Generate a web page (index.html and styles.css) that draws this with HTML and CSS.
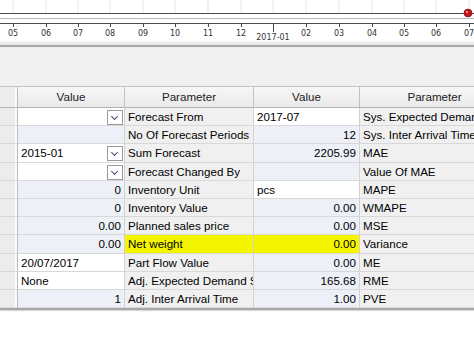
FILE: index.html
```html
<!DOCTYPE html>
<html lang="en">
<head>
    <meta charset="UTF-8">
    <title>Forecast Parameters</title>
    <link rel="stylesheet" href="styles.css">
</head>
<body>
    <div class="timeline">
        <svg width="474" height="45" viewBox="0 0 474 45">
            <g class="grid">
                <line x1="13" y1="0" x2="13" y2="13"/><line x1="46" y1="0" x2="46" y2="13"/>
                <line x1="78" y1="0" x2="78" y2="13"/><line x1="110" y1="0" x2="110" y2="13"/>
                <line x1="143" y1="0" x2="143" y2="13"/><line x1="175" y1="0" x2="175" y2="13"/>
                <line x1="208" y1="0" x2="208" y2="13"/><line x1="241" y1="0" x2="241" y2="13"/>
                <line x1="273" y1="0" x2="273" y2="13"/><line x1="306" y1="0" x2="306" y2="13"/>
                <line x1="339" y1="0" x2="339" y2="13"/><line x1="372" y1="0" x2="372" y2="13"/>
                <line x1="404" y1="0" x2="404" y2="13"/><line x1="436" y1="0" x2="436" y2="13"/>
                <line x1="469" y1="0" x2="469" y2="13"/>
            </g>
            <line class="track" x1="0" y1="13.5" x2="474" y2="13.5"/>
            <line class="guide" x1="0" y1="18.5" x2="474" y2="18.5"/>
            <line class="track" x1="0" y1="23.5" x2="474" y2="23.5"/>
            <g class="ticks">
                <line x1="13.5" y1="23" x2="13.5" y2="27"/><line x1="46.5" y1="23" x2="46.5" y2="27"/>
                <line x1="78.5" y1="23" x2="78.5" y2="27"/><line x1="110.5" y1="23" x2="110.5" y2="27"/>
                <line x1="143.5" y1="23" x2="143.5" y2="27"/><line x1="175.5" y1="23" x2="175.5" y2="27"/>
                <line x1="208.5" y1="23" x2="208.5" y2="27"/><line x1="241.5" y1="23" x2="241.5" y2="27"/>
                <line x1="273.5" y1="23" x2="273.5" y2="32"/><line x1="306.5" y1="23" x2="306.5" y2="27"/>
                <line x1="339.5" y1="23" x2="339.5" y2="27"/><line x1="372.5" y1="23" x2="372.5" y2="27"/>
                <line x1="404.5" y1="23" x2="404.5" y2="27"/><line x1="436.5" y1="23" x2="436.5" y2="27"/>
                <line x1="469.5" y1="23" x2="469.5" y2="27"/>
            </g>
            <g class="labels">
                <text x="13" y="36">05</text><text x="46" y="36">06</text>
                <text x="78" y="36">07</text><text x="110" y="36">08</text>
                <text x="143" y="36">09</text><text x="175" y="36">10</text>
                <text x="208" y="36">11</text><text x="241" y="36">12</text>
                <text x="273" y="40">2017-01</text><text x="306" y="36">02</text>
                <text x="339" y="36">03</text><text x="372" y="36">04</text>
                <text x="404" y="36">05</text><text x="436" y="36">06</text>
                <text x="469" y="36">07</text>
            </g>
            <circle class="marker" cx="468" cy="13" r="4"/>
            <circle class="shine" cx="467" cy="12" r="1"/>
        </svg>
    </div>

    <div class="toolbar"></div>

    <div class="params">
        <div class="hd corner"></div>
        <div class="hd">Value</div>
        <div class="hd">Parameter</div>
        <div class="hd">Value</div>
        <div class="hd">Parameter</div>

        <div class="rh"></div>
        <div class="val edit"><span class="drop"></span></div>
        <div class="name">Forecast From</div>
        <div class="val edit">2017-07</div>
        <div class="name">Sys. Expected Demand</div>

        <div class="rh"></div>
        <div class="val"></div>
        <div class="name">No Of Forecast Periods</div>
        <div class="val num">12</div>
        <div class="name">Sys. Inter Arrival Time</div>

        <div class="rh"></div>
        <div class="val edit">2015-01<span class="drop"></span></div>
        <div class="name">Sum Forecast</div>
        <div class="val num">2205.99</div>
        <div class="name">MAE</div>

        <div class="rh"></div>
        <div class="val edit"><span class="drop"></span></div>
        <div class="name">Forecast Changed By</div>
        <div class="val"></div>
        <div class="name">Value Of MAE</div>

        <div class="rh"></div>
        <div class="val num">0</div>
        <div class="name">Inventory Unit</div>
        <div class="val edit">pcs</div>
        <div class="name">MAPE</div>

        <div class="rh"></div>
        <div class="val num">0</div>
        <div class="name">Inventory Value</div>
        <div class="val num">0.00</div>
        <div class="name">WMAPE</div>

        <div class="rh"></div>
        <div class="val num">0.00</div>
        <div class="name">Planned sales price</div>
        <div class="val num">0.00</div>
        <div class="name">MSE</div>

        <div class="rh"></div>
        <div class="val num">0.00</div>
        <div class="name marked">Net weight</div>
        <div class="val num marked">0.00</div>
        <div class="name">Variance</div>

        <div class="rh"></div>
        <div class="val edit">20/07/2017</div>
        <div class="name">Part Flow Value</div>
        <div class="val num">0.00</div>
        <div class="name">ME</div>

        <div class="rh"></div>
        <div class="val edit">None</div>
        <div class="name">Adj. Expected Demand Sum</div>
        <div class="val num">165.68</div>
        <div class="name">RME</div>

        <div class="rh"></div>
        <div class="val num">1</div>
        <div class="name">Adj. Inter Arrival Time</div>
        <div class="val num">1.00</div>
        <div class="name">PVE</div>
    </div>
</body>
</html>
```

FILE: styles.css
```css
html, body {
    margin: 0;
    padding: 0;
    background: #fff;
    overflow: hidden;
}
body {
    width: 474px;
    height: 357px;
    font-family: "Liberation Sans", Arial, sans-serif;
    font-size: 11.6px;
    color: #000;
}
.timeline {
    height: 45px;
    background: linear-gradient(#fff 0, #fff 40px, #e0e0e0 45px);
    border-bottom: 2px solid #a9a9a9;
}
.timeline svg {
    display: block;
}
.grid line {
    stroke: #e6e6e6;
    stroke-width: 1;
}
.track {
    stroke: #4a4a4a;
    stroke-width: 1.2;
}
.guide {
    stroke: #b8b8b8;
    stroke-width: 1;
}
.ticks line {
    stroke: #444;
    stroke-width: 1;
}
.labels text {
    font-family: "DejaVu Sans", sans-serif;
    font-size: 8px;
    fill: #333;
    text-anchor: middle;
}
.marker {
    fill: #c8141a;
    stroke: #7a0a0c;
    stroke-width: 0.6;
}
.shine {
    fill: #ffb0b0;
}
.toolbar {
    height: 39px;
    background: #f0f0f0;
    border-bottom: 1px solid #c4c4c4;
}
.params {
    display: grid;
    grid-template-columns: 18px 107px 129px 106px 150px;
    grid-template-rows: 21px repeat(11, 18.2px);
    width: 510px;
    border-bottom: 2px solid #a8a8a8;
    box-shadow: 0 1px 1px #d8d8d8;
}
.params > div {
    box-sizing: border-box;
    border-right: 1px solid #d2d2d2;
    border-bottom: 1px solid #d8d8d8;
    padding: 0 3px;
    line-height: 17px;
    white-space: nowrap;
    overflow: hidden;
    position: relative;
}
.hd {
    background: linear-gradient(#f7f7f7, #e9e9e9);
    border-bottom: 1px solid #b4b4b4 !important;
    border-right: 1px solid #c2c2c2 !important;
    text-align: center;
    line-height: 20px !important;
    color: #222;
}
.corner, .rh {
    background: #ececec;
    box-shadow: inset -2px 0 0 #fafafa;
    border-right: 1px solid #bdbdbd !important;
}
.val {
    background: #eef0f8;
}
.val.edit {
    background: #fff;
}
.num {
    text-align: right;
}
.name {
    background: #f0f0f0;
}
.marked {
    background: #f5f500 !important;
}
.drop {
    position: absolute;
    right: 1px;
    top: 2px;
    width: 14px;
    height: 13px;
    border: 1px solid #9a9a9a;
    background: #fff;
}
.drop::after {
    content: "";
    position: absolute;
    left: 4px;
    top: 3px;
    width: 4px;
    height: 4px;
    border-right: 1.5px solid #3c4f6a;
    border-bottom: 1.5px solid #3c4f6a;
    transform: rotate(45deg);
}
```
